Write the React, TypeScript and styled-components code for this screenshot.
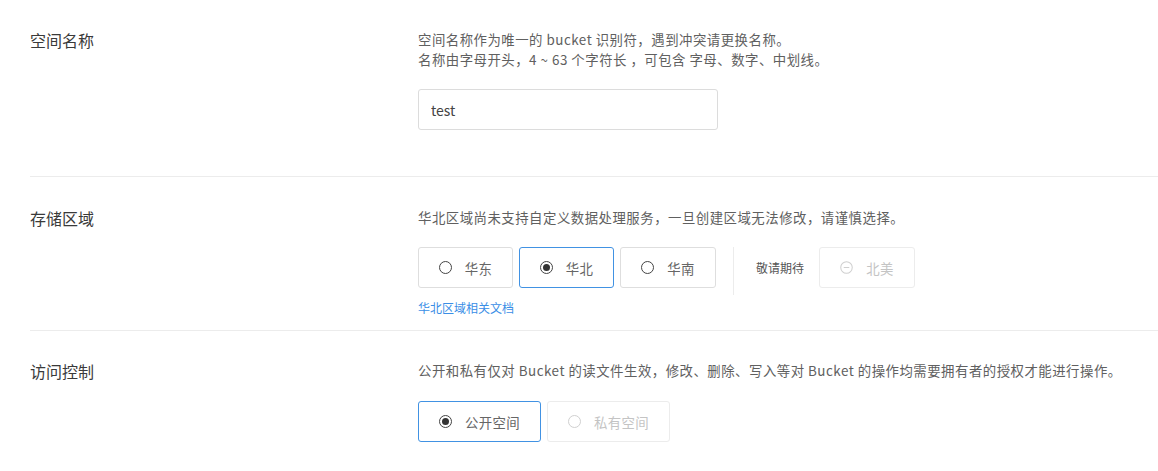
import React from "react";
import styled, { createGlobalStyle } from "styled-components";

const GlobalStyle = createGlobalStyle`
  html, body {
    margin: 0;
    padding: 0;
    background: #fff;
  }
  body {
    font-family: "Noto Sans CJK SC", "Noto Sans", sans-serif;
    color: #333;
  }
`;

const Page = styled.div`
  width: 1158px;
  height: 471px;
  overflow: hidden;
  padding-left: 30px;
  box-sizing: border-box;
`;

const Section = styled.section<{ $pt: number; $pb: number; $divider?: boolean }>`
  display: grid;
  grid-template-columns: 388px 1fr;
  padding: ${(p) => p.$pt}px 0 ${(p) => p.$pb}px;
  border-top: ${(p) => (p.$divider ? "1px solid #ececec" : "none")};
`;

const Label = styled.div`
  font-size: 16px;
  line-height: 22px;
  color: #3a3a3a;
`;

const Body = styled.div`
  display: flex;
  flex-direction: column;
  align-items: flex-start;
`;

const Desc = styled.p`
  margin: 0;
  font-size: 13.4px;
  line-height: 20px;
  letter-spacing: 0.5px;
  color: #606060;
  white-space: nowrap;
`;

const Input = styled.input`
  margin-top: 20px;
  width: 300px;
  height: 41px;
  box-sizing: border-box;
  border: 1px solid #dcdcdc;
  border-radius: 3px;
  padding: 0 12px;
  font-family: inherit;
  font-size: 14px;
  color: #444;
  outline: none;
`;

const OptionRow = styled.div<{ $mt: number }>`
  margin-top: ${(p) => p.$mt}px;
  display: flex;
  align-items: flex-start;
  gap: 6px;
`;

const Option = styled.div<{ $state: "on" | "off" | "disabled"; $w: number }>`
  width: ${(p) => p.$w}px;
  height: 41px;
  box-sizing: border-box;
  display: flex;
  align-items: center;
  justify-content: center;
  gap: 13px;
  border-radius: 3px;
  border: 1px solid
    ${(p) =>
      p.$state === "on" ? "#4192e3" : p.$state === "disabled" ? "#ececec" : "#dedede"};
  font-size: 13.4px;
  letter-spacing: 0.3px;
  color: ${(p) => (p.$state === "disabled" ? "#c4c4c4" : "#666")};
  background: #fff;
`;

const Radio = styled.span<{ $checked?: boolean; $disabled?: boolean }>`
  width: 13px;
  height: 13px;
  box-sizing: border-box;
  border-radius: 50%;
  border: 1px solid ${(p) => (p.$disabled ? "#d0d0d0" : "#444")};
  display: flex;
  align-items: center;
  justify-content: center;
  flex: none;

  &::after {
    content: "";
    width: 7px;
    height: 7px;
    border-radius: 50%;
    background: #333;
    display: ${(p) => (p.$checked ? "block" : "none")};
  }
`;

const VSep = styled.div`
  width: 1px;
  height: 48px;
  background: #ececec;
  margin: 0 16px 0 11px;
`;

const Soon = styled.span`
  font-size: 12px;
  color: #555;
  line-height: 41px;
  margin-right: 9px;
`;

const DocLink = styled.a`
  margin-top: 4px;
  font-size: 12px;
  line-height: 18px;
  color: #3a8ee6;
  text-decoration: none;
`;

const MinusCircle = () => (
  <svg width="13" height="13" viewBox="0 0 14 14" fill="none">
    <circle cx="7" cy="7" r="6.2" stroke="#cfcfcf" strokeWidth="1.1" />
    <line x1="4" y1="7" x2="10" y2="7" stroke="#cfcfcf" strokeWidth="1.1" />
  </svg>
);

export default function App() {
  return (
    <>
      <GlobalStyle />
      <Page>
        <Section $pt={29} $pb={46}>
          <Label>空间名称</Label>
          <Body>
            <Desc>空间名称作为唯一的 bucket 识别符，遇到冲突请更换名称。</Desc>
            <Desc>名称由字母开头，4 ~ 63 个字符长 ，可包含 字母、数字、中划线。</Desc>
            <Input defaultValue="test" />
          </Body>
        </Section>

        <Section $pt={30} $pb={13} $divider>
          <Label>存储区域</Label>
          <Body>
            <Desc>华北区域尚未支持自定义数据处理服务，一旦创建区域无法修改，请谨慎选择。</Desc>
            <OptionRow $mt={20}>
              <Option $state="off" $w={95}>
                <Radio />
                华东
              </Option>
              <Option $state="on" $w={95}>
                <Radio $checked />
                华北
              </Option>
              <Option $state="off" $w={96}>
                <Radio />
                华南
              </Option>
              <VSep />
              <Soon>敬请期待</Soon>
              <Option $state="disabled" $w={96}>
                <MinusCircle />
                北美
              </Option>
            </OptionRow>
            <DocLink href="#">华北区域相关文档</DocLink>
          </Body>
        </Section>

        <Section $pt={29} $pb={30} $divider>
          <Label>访问控制</Label>
          <Body>
            <Desc>公开和私有仅对 Bucket 的读文件生效，修改、删除、写入等对 Bucket 的操作均需要拥有者的授权才能进行操作。</Desc>
            <OptionRow $mt={21}>
              <Option $state="on" $w={123}>
                <Radio $checked />
                公开空间
              </Option>
              <Option $state="disabled" $w={123}>
                <Radio $disabled />
                私有空间
              </Option>
            </OptionRow>
          </Body>
        </Section>
      </Page>
    </>
  );
}
